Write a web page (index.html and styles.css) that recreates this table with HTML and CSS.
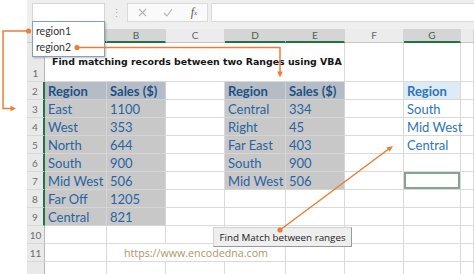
FILE: index.html
```html
<!DOCTYPE html>
<html>
<head>
  <meta charset="utf-8">
  <link rel="stylesheet" href="styles.css">
</head>
<body>
<div class="page">
  <!-- name box and formula bar -->
  <div class="formula-bar">
    <div class="name-box"></div>
    <div class="grip">⋮</div>
    <div class="fx-buttons">
      <span class="fx-btn">
        <svg width="9" height="9" viewBox="0 0 9 9"><path d="M1 1L8 8M8 1L1 8" stroke="#b4b4b4" stroke-width="1.1" fill="none"/></svg>
      </span>
      <span class="fx-btn">
        <svg width="10" height="9" viewBox="0 0 10 9"><path d="M1 5L4 8L9 1" stroke="#b4b4b4" stroke-width="1.1" fill="none"/></svg>
      </span>
      <span class="fx-btn fx-label"><i>f</i><sub>x</sub></span>
    </div>
    <div class="formula-input"></div>
  </div>

  <!-- worksheet -->
  <div class="sheet">
    <div class="corner"></div>
    <div class="ch sel">A</div><div class="ch sel">B</div><div class="ch">C</div><div class="ch sel">D</div>
    <div class="ch sel">E</div><div class="ch">F</div><div class="ch sel">G</div><div class="ch"></div>

    <div class="rh">1</div>
    <div class="c title">Find matching records between two Ranges using VBA</div>
    <div class="c"></div><div class="c"></div><div class="c"></div>

    <div class="rh sel">2</div>
    <div class="c th">Region</div><div class="c th">Sales ($)</div><div class="c"></div>
    <div class="c th">Region</div><div class="c th">Sales ($)</div><div class="c"></div>
    <div class="c gh">Region</div><div class="c"></div>

    <div class="rh sel">3</div>
    <div class="c t">East</div><div class="c t">1100</div><div class="c"></div>
    <div class="c t">Central</div><div class="c t">334</div><div class="c"></div>
    <div class="c">South</div><div class="c"></div>

    <div class="rh sel">4</div>
    <div class="c t">West</div><div class="c t">353</div><div class="c"></div>
    <div class="c t">Right</div><div class="c t">45</div><div class="c"></div>
    <div class="c">Mid West</div><div class="c"></div>

    <div class="rh sel">5</div>
    <div class="c t">North</div><div class="c t">644</div><div class="c"></div>
    <div class="c t">Far East</div><div class="c t">403</div><div class="c"></div>
    <div class="c">Central</div><div class="c"></div>

    <div class="rh sel">6</div>
    <div class="c t">South</div><div class="c t">900</div><div class="c"></div>
    <div class="c t">South</div><div class="c t">900</div><div class="c"></div>
    <div class="c"></div><div class="c"></div>

    <div class="rh sel">7</div>
    <div class="c t">Mid West</div><div class="c t">506</div><div class="c"></div>
    <div class="c t">Mid West</div><div class="c t">506</div><div class="c"></div>
    <div class="c active"></div><div class="c"></div>

    <div class="rh sel">8</div>
    <div class="c t">Far Off</div><div class="c t">1205</div><div class="c"></div>
    <div class="c"></div><div class="c"></div><div class="c"></div>
    <div class="c"></div><div class="c"></div>

    <div class="rh sel">9</div>
    <div class="c t">Central</div><div class="c t">821</div><div class="c"></div>
    <div class="c"></div><div class="c"></div><div class="c"></div>
    <div class="c"></div><div class="c"></div>

    <div class="rh">10</div>
    <div class="c"></div><div class="c"></div><div class="c"></div><div class="c"></div>
    <div class="c"></div><div class="c"></div><div class="c"></div><div class="c"></div>

    <div class="rh">11</div>
    <div class="c"></div>
    <div class="c url">https://www.encodedna.com</div>
    <div class="c"></div><div class="c"></div><div class="c"></div><div class="c"></div>

    <div class="rh"></div>
    <div class="c"></div><div class="c"></div><div class="c"></div><div class="c"></div>
    <div class="c"></div><div class="c"></div><div class="c"></div><div class="c"></div>
  </div>

  <!-- open name box list -->
  <ul class="name-list">
    <li>region1</li>
    <li>region2</li>
  </ul>

  <button class="macro-btn">Find Match between ranges</button>

  <!-- callout arrows -->
  <svg class="callouts" width="474" height="274" viewBox="0 0 474 274">
    <g stroke="#ed7d31" stroke-width="1.5" fill="none">
      <path d="M28 31H3V108.5H11"/>
      <path d="M77 47.5H280V72"/>
      <path d="M280 230L388 149.5"/>
    </g>
    <g fill="#ed7d31">
      <circle cx="28.5" cy="31" r="2.6"/>
      <circle cx="77" cy="47.5" r="2.6"/>
      <circle cx="280" cy="230" r="2.6"/>
      <polygon points="16,108.5 10.5,105.8 10.5,111.2"/>
      <polygon points="280,77.5 277.2,71.5 282.8,71.5"/>
      <polygon points="393,146 389.7,151.8 386.5,147.4"/>
    </g>
  </svg>
</div>
</body>
</html>
```

FILE: styles.css
```css
body {
  margin: 0;
  background: #fff;
  font-family: Lato, "Liberation Sans", sans-serif;
}

.page {
  position: relative;
  width: 474px;
  height: 274px;
  overflow: hidden;
}

/* top strip */
.formula-bar {
  margin-left: 27px;
  height: 29px;
  padding-top: 3px;
  box-sizing: border-box;
  background: #efefef;
  display: flex;
  align-items: flex-start;
}
.name-box {
  margin-left: 5px;
  width: 73px;
  height: 19px;
  background: #fff;
  border: 1px solid #d6d6d6;
  box-sizing: border-box;
}
.grip {
  width: 22px;
  text-align: center;
  color: #a9a9a9;
  font-size: 11px;
  line-height: 19px;
}
.fx-buttons {
  width: 81px;
  height: 19px;
  padding-left: 1px;
  background: #fafafa;
  border: 1px solid #dadada;
  box-sizing: border-box;
  display: flex;
  align-items: center;
}
.fx-btn {
  width: 26px;
  display: flex;
  justify-content: center;
  align-items: center;
}
.fx-label {
  font-family: "Liberation Serif", serif;
  font-size: 12px;
  color: #555;
}
.fx-label sub {
  font-size: 7px;
  font-style: italic;
}
.formula-input {
  flex: 1;
  margin-left: 3px;
  height: 19px;
  background: #fff;
  border: 1px solid #dadada;
  border-right: none;
  box-sizing: border-box;
}

/* grid */
.sheet {
  margin-left: 27px;
  display: grid;
  grid-template-columns: 18px 62px 59px 59px 61px 59px 59px 57px 13px;
  grid-template-rows: 14px 39px repeat(11, 18px);
}
.sheet > div {
  box-sizing: border-box;
  overflow: visible;
}
.corner {
  background: #e6e6e6;
  border-right: 1px solid #c8c8c8;
  border-bottom: 1px solid #c8c8c8;
}
.ch {
  background: #ececec;
  color: #666;
  font-size: 10px;
  line-height: 13px;
  text-align: center;
  border-right: 1px solid #d4d4d4;
  border-bottom: 1px solid #c6c6c6;
}
.ch.sel {
  background: #d5d5d5;
  color: #44654f;
  border-bottom: 2px solid #217346;
}
.rh {
  background: #e9e9e9;
  color: #6c6c6c;
  font-size: 10px;
  line-height: 14px;
  padding-bottom: 1px;
  display: flex;
  justify-content: center;
  align-items: flex-end;
  border-right: 1px solid #b9b9b9;
  border-bottom: 1px solid #d8d8d8;
}
.rh.sel {
  border-right: 2px solid #217346;
}

.c {
  padding-left: 3px;
  font-size: 13px;
  line-height: 18px;
  white-space: nowrap;
  color: #2e75b6;
  border-right: 1px solid #dadada;
  border-bottom: 1px solid #dadada;
}
.title {
  grid-column: span 5;
  padding-left: 7px;
  display: flex;
  align-items: center;
  font-family: "DejaVu Sans", sans-serif;
  font-weight: bold;
  font-size: 9.4px;
  color: #151515;
}
.th {
  background: #b5bcc5;
  color: #1f5283;
  font-weight: bold;
  border-color: #cbd0d6;
}
.t {
  background: #c8c8c8;
  color: #2a64a0;
  border-color: #d5d5d5;
}
.gh {
  background: #ddebf7;
  font-weight: bold;
}
.active {
  box-shadow: inset 0 0 0 2px #86a292;
}
.url {
  grid-column: span 3;
  padding-left: 0;
  text-align: center;
  font-family: "Open Sans", sans-serif;
  font-size: 10.7px;
  color: #a89a69;
}

/* dropdown from the name box */
.name-list {
  position: absolute;
  left: 32px;
  top: 21px;
  width: 73px;
  margin: 0;
  padding: 1px 0 1px 3px;
  list-style: none;
  box-sizing: border-box;
  background: #fff;
  border: 1px solid #84a0c0;
  box-shadow: 1px 1px 2px rgba(0, 0, 0, 0.25);
  font-size: 10.5px;
  line-height: 16px;
  color: #333;
}

.macro-btn {
  position: absolute;
  left: 213px;
  top: 227px;
  width: 139px;
  height: 20px;
  padding: 0;
  background: #eeeeee;
  border: 1px solid #d2d2d2;
  border-right-color: #9a9a9a;
  border-bottom-color: #9a9a9a;
  font-family: "Open Sans", sans-serif;
  font-size: 9.8px;
  color: #222;
}

.callouts {
  position: absolute;
  left: 0;
  top: 0;
  pointer-events: none;
}
```
